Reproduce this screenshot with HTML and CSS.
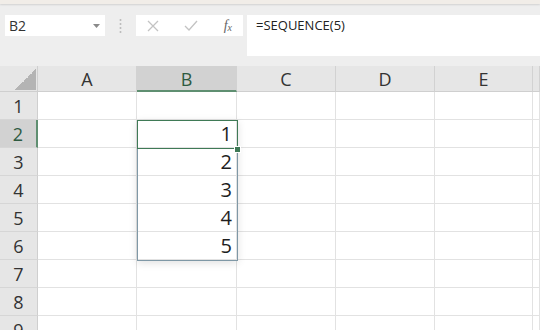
FILE: index.html
```html
<!DOCTYPE html>
<html lang="en">
<head>
    <meta charset="UTF-8">
    <title>SEQUENCE</title>
    <link rel="stylesheet" href="styles.css">
</head>
<body>
    <div class="titlebar"></div>

    <div class="formula-bar">
        <div class="namebox">
            <span>B2</span>
            <svg class="caret" width="7" height="4" viewBox="0 0 7 4"><polygon points="0 0, 7 0, 3.5 4" fill="#8a8a8a"/></svg>
        </div>
        <div class="grip">
            <svg width="3" height="16" viewBox="0 0 3 16">
                <circle cx="1.5" cy="2" r="1" fill="#b9b9b9"/>
                <circle cx="1.5" cy="6" r="1" fill="#b9b9b9"/>
                <circle cx="1.5" cy="10" r="1" fill="#b9b9b9"/>
                <circle cx="1.5" cy="14" r="1" fill="#b9b9b9"/>
            </svg>
        </div>
        <div class="fxbox">
            <svg width="12" height="12" viewBox="0 0 12 12"><path d="M1 1 L11 11 M11 1 L1 11" stroke="#c3c3c3" stroke-width="1.3"/></svg>
            <svg width="14" height="12" viewBox="0 0 14 12"><path d="M1 6 L5 10 L13 1" fill="none" stroke="#c3c3c3" stroke-width="1.3"/></svg>
            <span class="fx">f<sub>x</sub></span>
        </div>
        <div class="formula">=SEQUENCE(5)</div>
    </div>

    <div class="sheet">
        <div class="grid" id="grid"></div>
        <div class="spill">
            <div class="active"></div>
            <div class="handle"></div>
        </div>
    </div>

    <script>
        const cols = ['A', 'B', 'C', 'D', 'E', ''];
        const grid = document.getElementById('grid');

        function cell(cls, text) {
            const el = document.createElement('div');
            el.className = cls;
            el.textContent = text || '';
            grid.appendChild(el);
        }

        // header row
        cell('corner');
        cols.forEach(c => cell(c === 'B' ? 'col-head sel' : 'col-head', c));

        // rows 1..9
        for (let r = 1; r <= 9; r++) {
            cell(r === 2 ? 'row-head sel' : 'row-head', r);
            cols.forEach(c => {
                let val = '';
                if (c === 'B' && r >= 2 && r <= 6) val = r - 1;
                cell('cell', val);
            });
        }
    </script>
</body>
</html>
```

FILE: styles.css
```css
body {
    margin: 0;
    width: 540px;
    height: 330px;
    overflow: hidden;
    background: #ffffff;
    font-family: "Open Sans", "Noto Sans", sans-serif;
}

.titlebar {
    height: 4px;
    background: #f1ede8;
    box-shadow: 0 1px 2px rgba(0,0,0,0.12);
    position: relative;
}

.formula-bar {
    display: flex;
    align-items: flex-start;
    height: 62px;
    padding-top: 11px;
    box-sizing: border-box;
    background: #eeeeee;
}
.namebox {
    margin-left: 5px;
    width: 100px;
    height: 21px;
    background: #fff;
    display: flex;
    align-items: center;
    justify-content: space-between;
    padding: 0 5px 0 4px;
    box-sizing: border-box;
    font-size: 14px;
    color: #333;
}
.grip {
    width: 31px;
    height: 21px;
    display: flex;
    align-items: center;
    justify-content: center;
}
.fxbox {
    width: 107px;
    height: 21px;
    background: #fff;
    display: flex;
    align-items: center;
    justify-content: space-between;
    padding: 0 11px 0 11px;
    box-sizing: border-box;
}
.fx {
    font-family: "Liberation Serif", serif;
    font-style: italic;
    font-size: 14px;
    color: #666;
    line-height: 1;
}
.fx sub {
    font-size: 10px;
    vertical-align: -1px;
}
.formula {
    flex: 1;
    margin-left: 4px;
    height: 41px;
    background: #fff;
    padding: 1px 9px;
    box-sizing: border-box;
    font-size: 13px;
    color: #222;
}

.sheet {
    position: relative;
    background: #eeeeee;
}
.grid {
    display: grid;
    grid-template-columns: 38px 99px 100px 99px 99px 98px 1fr;
    grid-template-rows: 26px repeat(9, 28px);
}
.corner {
    background: #e6e6e6 linear-gradient(to top left, #b4b4b4 50%, transparent 50%) no-repeat 15px 3px / 21px 21px;
    border-right: 1px solid #cfcfcf;
    border-bottom: 1px solid #cfcfcf;
}
.col-head {
    background: #e6e6e6;
    border-right: 1px solid #d2d2d2;
    border-bottom: 1px solid #cfcfcf;
    text-align: center;
    font-size: 18px;
    line-height: 26px;
    color: #333;
}
.row-head {
    background: #e6e6e6;
    border-right: 1px solid #cfcfcf;
    border-bottom: 1px solid #d6d6d6;
    text-align: center;
    font-size: 18px;
    line-height: 28px;
    color: #333;
}
.col-head.sel {
    background: #d2d2d2;
    border-bottom: 2px solid #5f8f71;
    color: #2e5a41;
}
.row-head.sel {
    background: #d2d2d2;
    border-right: 2px solid #5f8f71;
    color: #2e5a41;
}
.cell {
    background: #fff;
    border-right: 1px solid #e2e2e2;
    border-bottom: 1px solid #e2e2e2;
    text-align: right;
    padding-right: 4px;
    font-size: 20px;
    line-height: 28px;
    color: #1e1e1e;
}

.spill {
    position: absolute;
    left: 137px;
    top: 54px;
    width: 101px;
    height: 141px;
    box-sizing: border-box;
    border: 1px solid #7f98a6;
    box-shadow: 0 2px 8px rgba(0,0,0,0.12);
}
.active {
    position: absolute;
    left: -1px;
    top: -1px;
    width: 101px;
    height: 29px;
    border: 1px solid #3f7a56;
    box-sizing: border-box;
}
.handle {
    position: absolute;
    left: 96px;
    top: 25px;
    width: 5px;
    height: 5px;
    background: #3f7a56;
    border: 1px solid #fff;
}
```
